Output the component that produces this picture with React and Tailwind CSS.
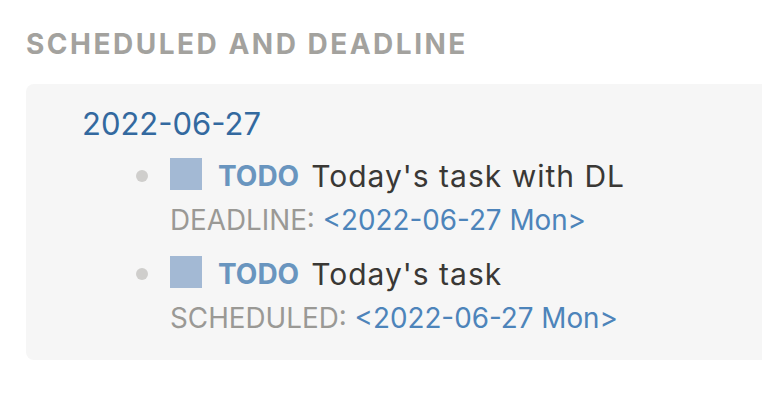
import React from "react";

const tasks = [
  { title: "Today's task with DL", label: "DEADLINE:", date: "<2022-06-27 Mon>" },
  { title: "Today's task", label: "SCHEDULED:", date: "<2022-06-27 Mon>" },
];

const TaskItem = ({ title, label, date }) => (
  <div className="flex flex-col">
    <div className="flex items-start h-[36px] whitespace-nowrap">
      <span className="w-[12px] h-[12px] rounded-full bg-[#cfcecc] ml-[110px] mt-[12px]"></span>
      <span className="w-[32px] h-[32px] bg-[#a3b9d4] ml-[22px]"></span>
      <span className="ml-[16px] text-[28px] leading-[36px] font-bold text-[#6995bf]">TODO</span>
      <span className="ml-[12px] text-[30px] leading-[36px] tracking-[1px] text-[#3a3835]">{title}</span>
    </div>
    <div className="mt-[10px] ml-[144px] text-[27.8px] leading-[32px] whitespace-nowrap">
      <span className="text-[#9a9995]">{label}</span>{" "}
      <span className="text-[#4d84ba]">{date}</span>
    </div>
  </div>
);

export default function App() {
  return (
    <div
      className="w-[762px] h-[400px] overflow-hidden bg-white"
      style={{ fontFamily: "Inter, 'Noto Sans', sans-serif" }}
    >
      <h2 className="ml-[26px] pt-[30px] text-[28px] leading-[28px] font-bold text-[#a3a29e] tracking-[2.5px] whitespace-nowrap">
        SCHEDULED AND DEADLINE
      </h2>
      <div className="ml-[26px] mt-[26px] w-[760px] rounded-lg bg-[#f6f6f6] pt-[24px] pb-[26px]">
        <div className="ml-[56px] text-[31px] leading-[32px] text-[#33699f]">2022-06-27</div>
        <div className="mt-[18px] flex flex-col gap-[20px]">
          {tasks.map((t) => (
            <TaskItem key={t.label} {...t} />
          ))}
        </div>
      </div>
    </div>
  );
}
